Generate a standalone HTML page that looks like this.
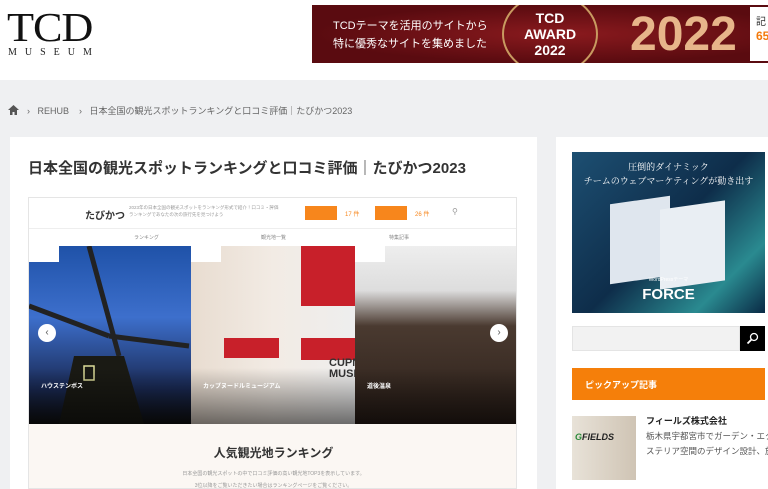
<!DOCTYPE html>
<html><head><meta charset="utf-8"><style>
*{margin:0;padding:0;box-sizing:border-box}
body{width:768px;height:489px;overflow:hidden;background:#eff0f2;font-family:"Liberation Sans","Noto Sans CJK JP",sans-serif;position:relative;color:#222}
.a{position:absolute}
</style></head><body>
<div class="a" style="left:0;top:0;width:768px;height:80px;background:#fff"></div>
<div class="a" style="left:7px;top:7px;font-family:'Liberation Serif',serif;font-size:41px;line-height:40px;letter-spacing:-1px;color:#111;transform:scaleX(1.08);transform-origin:left">TCD</div>
<div class="a" style="left:8px;top:47px;font-family:'Liberation Serif',serif;font-size:10px;letter-spacing:8px;color:#222">MUSEUM</div>
<div class="a" style="left:312px;top:5px;width:456px;height:58px;background:radial-gradient(ellipse at 55% 50%,#8a1a1e,#5a0b10 70%);overflow:hidden">
 <div class="a" style="left:21px;top:12px;color:#fff;font-size:11px;line-height:18px">TCDテーマを活用のサイトから<br>特に優秀なサイトを集めました</div>
 <div class="a" style="left:190px;top:-12px;width:96px;height:82px;border:2px solid #c89a60;border-radius:50%"></div>
 <div class="a" style="left:198px;top:5px;width:80px;color:#fff;font-size:14px;line-height:16px;text-align:center;font-weight:bold">TCD<br>AWARD<br>2022</div>
 <div class="a" style="left:318px;top:3px;color:#e7b58a;font-size:48px;font-weight:bold;line-height:54px">2022</div>
 <div class="a" style="left:438px;top:2px;width:20px;height:54px;background:#fff"></div>
 <div class="a" style="left:444px;top:8px;font-size:10px;color:#333">記</div>
 <div class="a" style="left:444px;top:24px;font-size:12px;color:#f37a0c;font-weight:bold">65</div>
</div>
<svg class="a" style="left:8px;top:105px" width="11" height="10" viewBox="0 0 11 10"><path d="M5.5 0 L11 5 H9 V10 H6.5 V7 H4.5 V10 H2 V5 H0Z" fill="#555"/></svg>
<div class="a" style="left:27px;top:104px;font-size:9px;color:#666;white-space:nowrap">›&nbsp;&nbsp;&nbsp;REHUB&nbsp;&nbsp;&nbsp;&nbsp;›&nbsp;&nbsp;&nbsp;日本全国の観光スポットランキングと口コミ評価｜たびかつ2023</div>
<div class="a" style="left:10px;top:137px;width:527px;height:352px;background:#fff"></div>
<div class="a" style="left:28px;top:157px;font-size:15px;font-weight:bold;color:#333">日本全国の観光スポットランキングと口コミ評価｜たびかつ2023</div>
<div class="a" style="left:28px;top:197px;width:489px;height:292px;border:1px solid #e5e5e5;background:#fff;overflow:hidden">
 <div class="a" style="left:56px;top:9px;font-size:10px;font-weight:bold;color:#333">たびかつ</div>
 <div class="a" style="left:100px;top:6px;width:200px;height:14px;font-size:4.5px;color:#999;line-height:7px">2023年の日本全国の観光スポットをランキング形式で紹介！口コミ・評価<br>ランキングであなたの次の旅行先を見つけよう</div>
 <div class="a" style="left:276px;top:8px;width:32px;height:14px;background:#f7861c"></div>
 <div class="a" style="left:316px;top:11px;font-size:6px;color:#f7861c">17 件</div>
 <div class="a" style="left:346px;top:8px;width:32px;height:14px;background:#f7861c"></div>
 <div class="a" style="left:386px;top:11px;font-size:6px;color:#f7861c">26 件</div>
 <div class="a" style="left:423px;top:9px;font-size:8px;color:#999">⚲</div>
 <div class="a" style="left:0;top:30px;width:489px;height:18px;border-top:1px solid #eee;font-size:5px;color:#888">
  <span class="a" style="left:105px;top:5px">ランキング</span><span class="a" style="left:232px;top:5px">観光地一覧</span><span class="a" style="left:360px;top:5px">特集記事</span></div>
 <div class="a" style="left:0;top:48px;width:162px;height:178px;background:linear-gradient(#1f52a8,#3d6fcc 40%,#1a2a55 80%,#111)"></div>
 <svg class="a" style="left:0;top:48px" width="162" height="178"><g stroke="#222" stroke-width="5"><line x1="60" y1="0" x2="90" y2="110"/><line x1="0" y1="60" x2="80" y2="90"/><line x1="80" y1="90" x2="160" y2="100"/></g><path d="M30 178 L45 110 H95 L115 178Z" fill="#1a1a14"/><rect x="55" y="120" width="10" height="14" fill="none" stroke="#dd9" stroke-width="1.5"/></svg>
 <div class="a" style="left:162px;top:48px;width:164px;height:178px;background:linear-gradient(90deg,#e8dcd0,#f2ebe4 50%,#eee 100%)"></div>
 <div class="a" style="left:272px;top:48px;width:54px;height:60px;background:#c8202a"></div>
 <div class="a" style="left:272px;top:140px;width:54px;height:22px;background:#c8202a"></div>
 <div class="a" style="left:195px;top:140px;width:55px;height:20px;background:#c8202a"></div>
 <div class="a" style="left:300px;top:160px;font-size:11px;font-weight:bold;line-height:11px;color:#333">CUPNO<br>MUSEU</div>
 <div class="a" style="left:326px;top:48px;width:163px;height:178px;background:linear-gradient(#eee,#ddd 25%,#4a3a30 45%,#2a1e18)"></div>
 <div class="a" style="left:0;top:170px;width:489px;height:56px;background:linear-gradient(transparent,rgba(0,0,0,.55))"></div>
 <div class="a" style="left:0;top:48px;width:30px;height:16px;background:#fff"></div>
 <div class="a" style="left:162px;top:48px;width:30px;height:16px;background:#fff"></div>
 <div class="a" style="left:326px;top:48px;width:30px;height:16px;background:#fff"></div>
 <div class="a" style="left:9px;top:126px;width:18px;height:18px;border-radius:50%;background:#fff;font-size:10px;text-align:center;line-height:18px;color:#555">‹</div>
 <div class="a" style="left:461px;top:126px;width:18px;height:18px;border-radius:50%;background:#fff;font-size:10px;text-align:center;line-height:18px;color:#555">›</div>
 <div class="a" style="left:12px;top:183px;font-size:6px;color:#fff;font-weight:bold">ハウステンボス</div>
 <div class="a" style="left:174px;top:183px;font-size:6px;color:#fff;font-weight:bold">カップヌードルミュージアム</div>
 <div class="a" style="left:338px;top:183px;font-size:6px;color:#fff;font-weight:bold">道後温泉</div>
 <div class="a" style="left:0;top:226px;width:489px;height:66px;background:#fbf7f3"></div>
 <div class="a" style="left:0;top:246px;width:489px;text-align:center;font-size:12px;font-weight:bold;color:#333">人気観光地ランキング</div>
 <div class="a" style="left:0;top:270px;width:489px;text-align:center;font-size:5px;color:#999;line-height:12px">日本全国の観光スポットの中で口コミ評価の高い観光地TOP3を表示しています。<br>3位以降をご覧いただきたい場合はランキングページをご覧ください。</div>
</div>
<div class="a" style="left:556px;top:137px;width:212px;height:352px;background:#fff"></div>
<div class="a" style="left:572px;top:152px;width:193px;height:161px;background:linear-gradient(135deg,#1d4f72,#0e2d4a 50%,#2a8a90 80%,#0a2a45)"></div>
<div class="a" style="left:610px;top:200px;width:60px;height:80px;background:#dfe6ee;transform:skewY(-8deg)"></div>
<div class="a" style="left:660px;top:205px;width:65px;height:80px;background:#e9eef3;transform:skewY(-8deg)"></div>
<div class="a" style="left:572px;top:160px;width:193px;text-align:center;font-family:'Liberation Serif','Noto Serif CJK SC',serif;font-size:9px;line-height:14px;color:#fff">圧倒的ダイナミック<br>チームのウェブマーケティングが動き出す</div>
<div class="a" style="left:572px;top:276px;width:193px;text-align:center;color:#fff;font-size:5px">WordPressテーマ</div>
<div class="a" style="left:572px;top:286px;width:193px;text-align:center;color:#fff;font-size:15px;font-weight:bold">FORCE</div>
<div class="a" style="left:572px;top:326px;width:168px;height:25px;background:#f2f2f2;border:1px solid #e4e4e4"></div>
<div class="a" style="left:740px;top:326px;width:25px;height:25px;background:#000"></div>
<svg class="a" style="left:746px;top:332px" width="13" height="13"><circle cx="8" cy="5" r="3.5" fill="none" stroke="#fff" stroke-width="1.3"/><line x1="5.5" y1="7.5" x2="1.5" y2="11.5" stroke="#fff" stroke-width="1.8"/></svg>
<div class="a" style="left:572px;top:368px;width:193px;height:32px;background:#f57f0a"></div>
<div class="a" style="left:585px;top:378px;font-size:9px;font-weight:bold;color:#fff">ピックアップ記事</div>
<div class="a" style="left:572px;top:416px;width:64px;height:64px;background:linear-gradient(90deg,#e8e2d8,#cfc4b4)"></div>
<div class="a" style="left:575px;top:432px;font-size:9px;font-style:italic;font-weight:bold;color:#222"><span style="color:#2a8a3a">G</span>FIELDS</div>
<div class="a" style="left:646px;top:414px;font-size:9px;font-weight:bold;color:#222">フィールズ株式会社</div>
<div class="a" style="left:646px;top:429px;font-size:8.5px;color:#555;line-height:15px;white-space:nowrap">栃木県宇都宮市でガーデン・エク<br>ステリア空間のデザイン設計、施</div>
</body></html>
